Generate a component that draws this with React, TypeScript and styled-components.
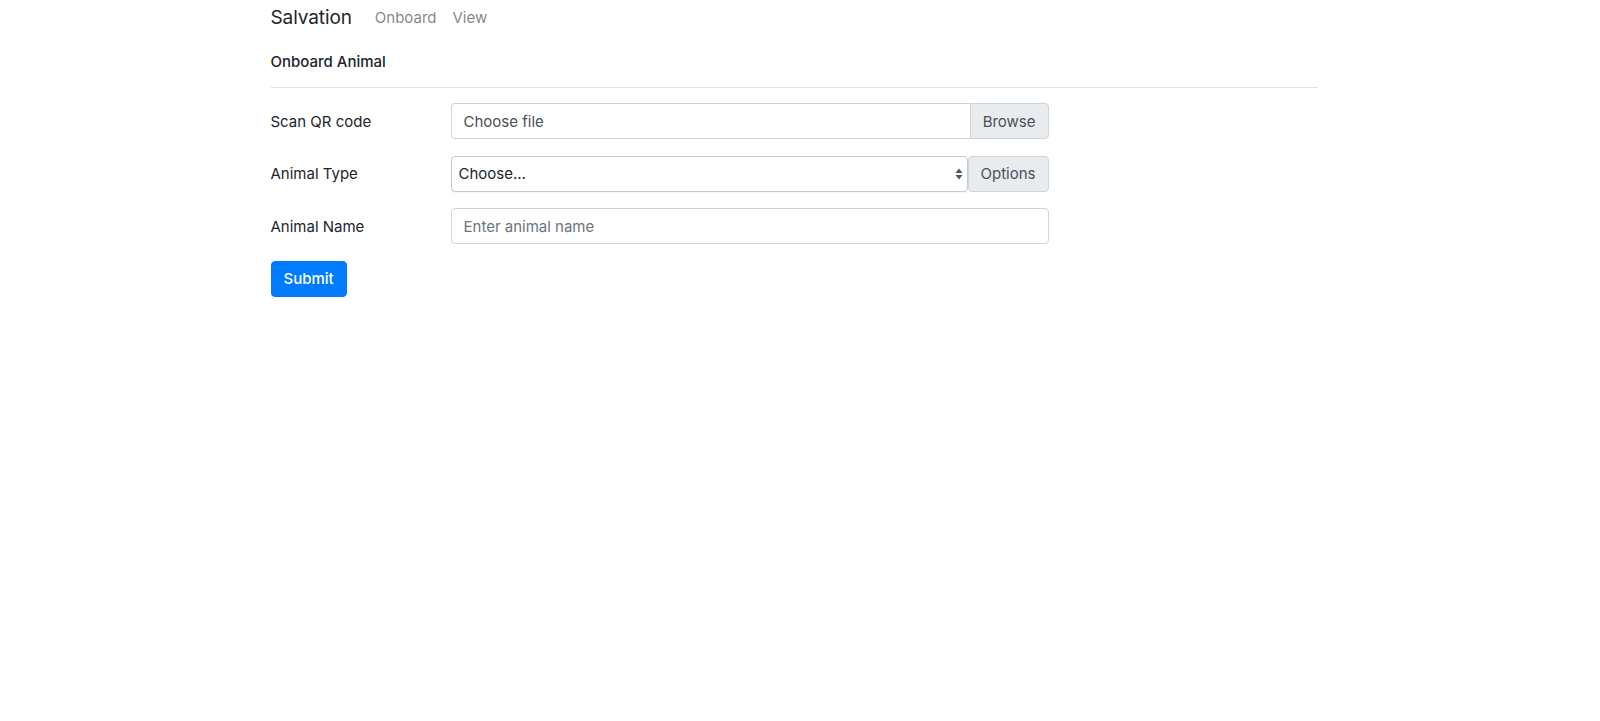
import styled, { createGlobalStyle } from "styled-components";

const GlobalStyle = createGlobalStyle`
    body {
        margin: 0;
        background: #fff;
        font-family: Inter, "Helvetica Neue", "Liberation Sans", Arial, sans-serif;
        color: #212529;
    }
`

const Page = styled.div`
    padding-right: 12px;
`

const Container = styled.div`
    width: 1047px;
    margin: 0 auto;
`

const Nav = styled.nav`
    height: 35px;
    display: flex;
    align-items: center;
    gap: 23px;

    .brand{
        font-size: 19px;
        color: #212529;
        letter-spacing: -0.1px;
    }
    .links{
        display: flex;
        gap: 16px;
    }
`

const NavLink = styled.a`
    font-size: 15px;
    color: rgba(0, 0, 0, 0.5);
    text-decoration: none;
`

const Title = styled.h6`
    margin: 16px 0 0 0;
    height: 22px;
    line-height: 22px;
    font-size: 15px;
    font-weight: 500;
`

const Divider = styled.hr`
    margin: 14px 0 15px 0;
    border: 0;
    border-top: 1px solid #dedede;
`

const Form = styled.form`
    display: flex;
    flex-direction: column;
    gap: 16.5px;
`

const Row = styled.div`
    display: grid;
    grid-template-columns: 180px 598px;
    align-items: center;
    height: 36px;

    label{
        font-size: 15px;
        color: #212529;
    }
`

const Group = styled.div`
    display: flex;
    height: 36px;
    position: relative;
`

const FileBox = styled.div`
    flex: 1;
    display: flex;
    align-items: center;
    border: 1px solid #ced4da;
    border-right: none;
    border-radius: 4px 0 0 4px;
    padding: 0 12px;
    font-size: 15px;
    color: #495057;
`

const Addon = styled.span<{ $round?: boolean }>`
    display: flex;
    align-items: center;
    padding: 0 12px;
    background: #e9ecef;
    border: 1px solid #ced4da;
    border-radius: ${p => p.$round ? "4px" : "0 4px 4px 0"};
    font-size: 15px;
    color: #495057;
`

const Select = styled.select`
    flex: 1;
    appearance: none;
    height: 36px;
    border: 1px solid #c9c9c9;
    border-radius: 4px;
    background: #fff;
    padding: 0 7px;
    font: 15px Inter, "Helvetica Neue", "Liberation Sans", Arial, sans-serif;
    color: #212529;
    box-shadow: 0 1px 1px rgba(0, 0, 0, 0.05);
`

const Arrows = styled.svg`
    position: absolute;
    left: 504px;
    top: 12px;
    pointer-events: none;
`

const TextInput = styled.input`
    flex: 1;
    height: 36px;
    box-sizing: border-box;
    border: 1px solid #ced4da;
    border-radius: 4px;
    padding: 0 12px;
    font: 15px Inter, "Helvetica Neue", "Liberation Sans", Arial, sans-serif;
    color: #495057;

    &::placeholder{
        color: #6c757d;
    }
`

const SubmitButton = styled.button`
    align-self: flex-start;
    height: 36px;
    padding: 0 12px;
    border: 1px solid #007bff;
    border-radius: 4px;
    background: #007bff;
    color: #fff;
    font: 500 15px Inter, "Helvetica Neue", "Liberation Sans", Arial, sans-serif;
`

export default function App(){
    return(
        <Page>
            <GlobalStyle/>
            <Container>
                <Nav>
                    <span className="brand">Salvation</span>
                    <div className="links">
                        <NavLink href="#">Onboard</NavLink>
                        <NavLink href="#">View</NavLink>
                    </div>
                </Nav>
                <Title>Onboard Animal</Title>
                <Divider/>
                <Form>
                    <Row>
                        <label>Scan QR code</label>
                        <Group>
                            <FileBox>Choose file</FileBox>
                            <Addon>Browse</Addon>
                        </Group>
                    </Row>
                    <Row>
                        <label>Animal Type</label>
                        <Group>
                            <Select defaultValue="">
                                <option value="">Choose...</option>
                                <option value="dog">Dog</option>
                                <option value="cat">Cat</option>
                            </Select>
                            <Arrows width="8" height="12" viewBox="0 0 8 12">
                                <path d="M4 0.5 L7.5 5 L0.5 5 Z" fill="#555"/>
                                <path d="M4 11.5 L7.5 7 L0.5 7 Z" fill="#555"/>
                            </Arrows>
                            <Addon $round>Options</Addon>
                        </Group>
                    </Row>
                    <Row>
                        <label>Animal Name</label>
                        <Group>
                            <TextInput placeholder="Enter animal name"/>
                        </Group>
                    </Row>
                    <SubmitButton type="button">Submit</SubmitButton>
                </Form>
            </Container>
        </Page>
    )
}
